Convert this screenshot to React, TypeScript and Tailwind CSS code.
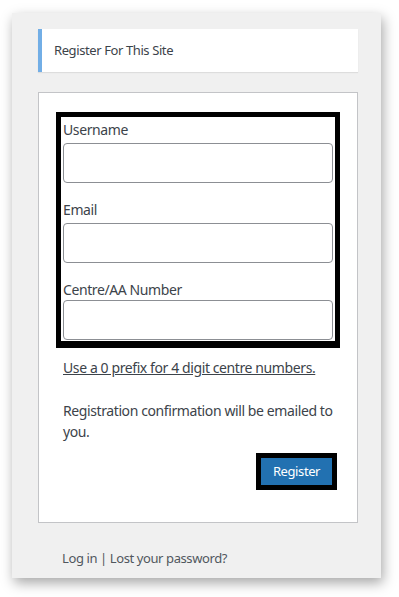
export default function App() {
  return (
    <div className="min-h-screen bg-white pt-[13px] pl-[12px] font-['Noto_Sans',sans-serif] tracking-[-0.4px] text-[#3c434a]">
      <div className="w-[369px] h-[565px] bg-[#f0f0f0] pt-[16px] pl-[26px] pr-[23px] shadow-[2px_5px_12px_rgba(0,0,0,0.35)]">
        {/* Message */}
        <div className="h-[43px] bg-white border-l-4 border-[#72aee6] pl-[12px] flex items-center text-[13px] shadow-[0_1px_1px_rgba(0,0,0,0.08)]">
          Register For This Site
        </div>

        {/* Form */}
        <form className="mt-[20px] h-[431px] bg-white border border-[#c3c4c7] pt-[19px] px-[17px]">
          <div className="border-[5px] border-b-[7px] border-black px-[2px] pt-[3px] pb-[1px]">
            <label className="block text-[14px] leading-[20px] mb-[3px]">Username</label>
            <input type="text" className="block w-full h-[40px] border border-[#8c8f94] rounded-[4px]" />
            <label className="block text-[14px] leading-[20px] mt-[17px] mb-[3px]">Email</label>
            <input type="text" className="block w-full h-[40px] border border-[#8c8f94] rounded-[4px]" />
            <label className="block text-[14px] leading-[20px] mt-[17px]">Centre/AA Number</label>
            <input type="text" className="block w-full h-[40px] border border-[#8c8f94] rounded-[4px]" />
          </div>

          <p className="mt-[9px] px-[7px] text-[14px] leading-[21px]">
            <a href="#" className="underline">Use a 0 prefix for 4 digit centre numbers.</a>
          </p>
          <p className="mt-[22px] px-[7px] text-[14px] leading-[21px]">
            Registration confirmation will be emailed to you.
          </p>

          <div className="mt-[11px] flex justify-end pr-[3px]">
            <button type="button" className="w-[81px] h-[37px] border-[5px] border-black bg-[#2271b1] text-white text-[13px]">
              Register
            </button>
          </div>
        </form>

        {/* Nav */}
        <p className="mt-[26px] pl-[24px] text-[13px] leading-[19px] text-[#50575e]">
          <a href="#">Log in</a> | <a href="#">Lost your password?</a>
        </p>
      </div>
    </div>
  );
}
